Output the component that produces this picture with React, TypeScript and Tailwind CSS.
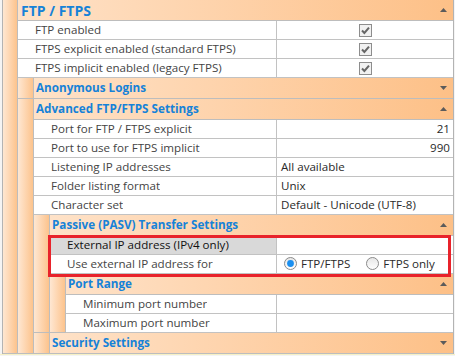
import React from "react";

// ─── Types ────────────────────────────────────────────────────────────────────
type Kind = "check" | "num" | "text" | "radio" | "empty";

interface Prop {
  label: string;
  kind: Kind;
  value?: string;
  selected?: boolean;
}

interface Category {
  title: string;
  open: boolean;
  props?: Prop[];
  subs?: Category[];
  boxed?: boolean;
}

// ─── Data ─────────────────────────────────────────────────────────────────────
const TREE: Category = {
  title: "FTP / FTPS",
  open: true,
  props: [
    { label: "FTP enabled", kind: "check" },
    { label: "FTPS explicit enabled (standard FTPS)", kind: "check" },
    { label: "FTPS implicit enabled (legacy FTPS)", kind: "check" },
  ],
  subs: [
    { title: "Anonymous Logins", open: false },
    {
      title: "Advanced FTP/FTPS Settings",
      open: true,
      props: [
        { label: "Port for FTP / FTPS explicit", kind: "num", value: "21" },
        { label: "Port to use for FTPS implicit", kind: "num", value: "990" },
        { label: "Listening IP addresses", kind: "text", value: "All available" },
        { label: "Folder listing format", kind: "text", value: "Unix" },
        { label: "Character set", kind: "text", value: "Default - Unicode (UTF-8)" },
      ],
      subs: [
        {
          title: "Passive (PASV) Transfer Settings",
          open: true,
          boxed: true,
          props: [
            { label: "External IP address (IPv4 only)", kind: "empty", selected: true },
            { label: "Use external IP address for", kind: "radio" },
          ],
          subs: [
            {
              title: "Port Range",
              open: true,
              props: [
                { label: "Minimum port number", kind: "empty" },
                { label: "Maximum port number", kind: "empty" },
              ],
            },
          ],
        },
        { title: "Security Settings", open: false },
      ],
    },
  ],
};

// ─── Small drawings ───────────────────────────────────────────────────────────
function Arrow({ open }: { open: boolean }) {
  return (
    <svg width="7" height="4" viewBox="0 0 7 4" className="shrink-0">
      <polygon points={open ? "3.5,0 7,4 0,4" : "0,0 7,0 3.5,4"} fill="#5b5b5b" />
    </svg>
  );
}

function CheckBox() {
  return (
    <svg width="13" height="13" viewBox="0 0 13 13">
      <rect x="0.5" y="0.5" width="12" height="12" fill="#f1f1f1" stroke="#8d8d8d" />
      <path d="M3 6.5 L5.4 9 L10 3.6" fill="none" stroke="#666" strokeWidth="2" />
    </svg>
  );
}

function Radio({ on }: { on: boolean }) {
  return (
    <svg width="13" height="13" viewBox="0 0 13 13" className="shrink-0">
      <defs>
        <linearGradient id="rg" x1="0" y1="0" x2="0" y2="1">
          <stop offset="0" stopColor="#e6e6e6" />
          <stop offset="1" stopColor="#ffffff" />
        </linearGradient>
      </defs>
      <circle cx="6.5" cy="6.5" r="6" fill="url(#rg)" stroke="#8a8a8a" />
      {on && <circle cx="6.5" cy="6.5" r="3.4" fill="#1a8ff0" />}
    </svg>
  );
}

// ─── Rows ─────────────────────────────────────────────────────────────────────
function Indent({ first }: { first: boolean }) {
  return (
    <div
      className={`${first ? "w-[15px]" : "w-[16px]"} shrink-0 border-r border-b border-[#bdbdbd] bg-linear-to-r from-[#fee7d2] to-[#fcc38c]`}
    />
  );
}

function Header({ cat, top }: { cat: Category; top: boolean }) {
  return (
    <div className="flex h-[21px] items-center border-b border-[#bdbdbd] bg-linear-to-r from-[#fee2c8] to-[#fdc087] pr-[6px]">
      <span
        className={`flex-1 font-bold text-[#1682d8] ${top ? "pl-[3px] text-[14px]" : "pl-[2px] text-[11.7px]"}`}
      >
        {cat.title}
      </span>
      <Arrow open={cat.open} />
    </div>
  );
}

function Value({ p }: { p: Prop }) {
  if (p.kind === "check")
    return (
      <div className="flex h-full items-center justify-center">
        <CheckBox />
      </div>
    );
  if (p.kind === "num") return <div className="pr-[3px] text-right">{p.value}</div>;
  if (p.kind === "text") return <div className="pl-[4px]">{p.value}</div>;
  if (p.kind === "radio")
    return (
      <div className="flex items-center pl-[7px]">
        <Radio on />
        <span className="ml-[4px]">FTP/FTPS</span>
        <span className="ml-[16px]">
          <Radio on={false} />
        </span>
        <span className="ml-[4px]">FTPS only</span>
      </div>
    );
  return null;
}

function PropRow({ p }: { p: Prop }) {
  return (
    <div className="flex h-[19px] border-b border-[#c2c2c2] bg-white text-[11.6px]">
      <div
        className={`flex min-w-0 flex-1 items-center border-r border-[#c2c2c2] pl-[17px] ${
          p.selected ? "bg-[#d9d9d9] text-[#111]" : "text-[#444]"
        }`}
      >
        <span className="truncate">{p.label}</span>
      </div>
      <div className="flex w-[176px] shrink-0 flex-col justify-center text-[#2a2a2a]">
        <Value p={p} />
      </div>
    </div>
  );
}

function CategoryBlock({ cat, depth }: { cat: Category; depth: number }) {
  const rows = (cat.props ?? []).map((p) => <PropRow key={p.label} p={p} />);
  return (
    <div className="flex">
      <Indent first={depth === 0} />
      <div className="min-w-0 flex-1">
        <Header cat={cat} top={depth === 0} />
        {cat.open &&
          (cat.boxed ? (
            <div className="relative">
              {rows}
              {/* annotation frame over the two rows */}
              <div className="pointer-events-none absolute -left-[2px] -top-[1px] right-[2px] -bottom-[3px] border-[3px] border-[#e8232b]" />
            </div>
          ) : (
            rows
          ))}
        {cat.open &&
          (cat.subs ?? []).map((s) => <CategoryBlock key={s.title} cat={s} depth={depth + 1} />)}
      </div>
    </div>
  );
}

// ─── Page ─────────────────────────────────────────────────────────────────────
export default function App() {
  return (
    <div className="h-[356px] w-[455px] overflow-hidden bg-[#f4f4f4] font-['Open_Sans',sans-serif]">
      <div className="ml-[2px] w-[452px] border-x border-[#b3b3b3]">
        <CategoryBlock cat={TREE} depth={0} />
      </div>
      <div className="h-[1px] w-full bg-[#f6f1c6]" />
    </div>
  );
}
